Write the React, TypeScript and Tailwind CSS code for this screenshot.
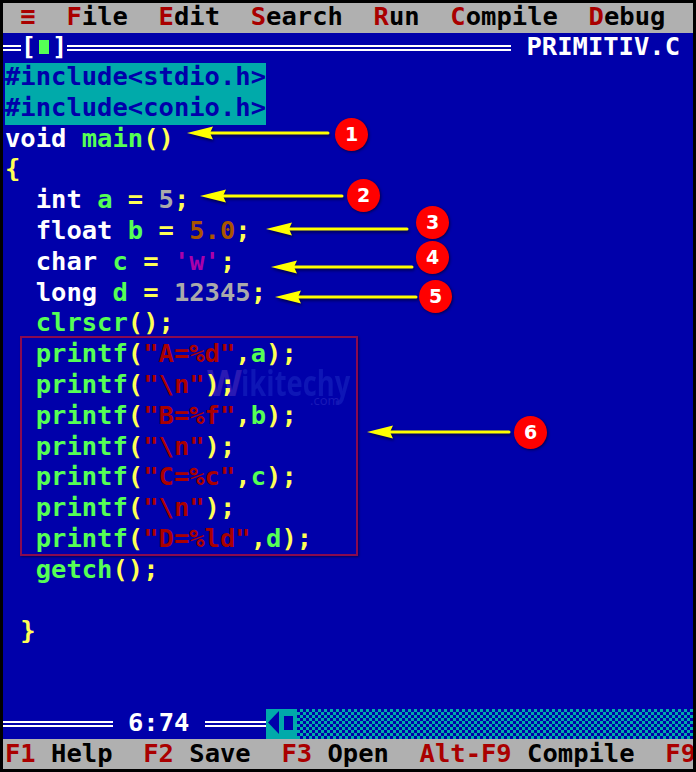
const RED = "text-[#aa0000]"
const WHITE = "text-white"
const GREEN = "text-[#55ff55]"
const YELLOW = "text-[#ffff55]"
const GRAY = "text-[#aaaaaa]"
const ORANGE = "text-[#aa5500]"
const MAGENTA = "text-[#aa00aa]"

type Seg = [string, string]

const code: Seg[][] = [
  [["void ", WHITE], ["main", GREEN], ["()", YELLOW]],
  [["{", YELLOW]],
  [["  int ", WHITE], ["a ", GREEN], ["= ", YELLOW], ["5", GRAY], [";", YELLOW]],
  [["  float ", WHITE], ["b ", GREEN], ["= ", YELLOW], ["5.0", ORANGE], [";", YELLOW]],
  [["  char ", WHITE], ["c ", GREEN], ["= ", YELLOW], ["'w'", MAGENTA], [";", YELLOW]],
  [["  long ", WHITE], ["d ", GREEN], ["= ", YELLOW], ["12345", GRAY], [";", YELLOW]],
  [["  clrscr", GREEN], ["();", YELLOW]],
  [["  printf", GREEN], ["(", YELLOW], ['"A=%d"', RED], [",", YELLOW], ["a", GREEN], [");", YELLOW]],
  [["  printf", GREEN], ["(", YELLOW], ['"\\n"', RED], [");", YELLOW]],
  [["  printf", GREEN], ["(", YELLOW], ['"B=%f"', RED], [",", YELLOW], ["b", GREEN], [");", YELLOW]],
  [["  printf", GREEN], ["(", YELLOW], ['"\\n"', RED], [");", YELLOW]],
  [["  printf", GREEN], ["(", YELLOW], ['"C=%c"', RED], [",", YELLOW], ["c", GREEN], [");", YELLOW]],
  [["  printf", GREEN], ["(", YELLOW], ['"\\n"', RED], [");", YELLOW]],
  [["  printf", GREEN], ["(", YELLOW], ['"D=%ld"', RED], [",", YELLOW], ["d", GREEN], [");", YELLOW]],
  [["  getch", GREEN], ["();", YELLOW]],
  [["", WHITE]],
  [[" }", YELLOW]],
]

const arrows = [
  { tip: 187, tail: 328, y: 133 },
  { tip: 200, tail: 342, y: 196 },
  { tip: 266, tail: 407, y: 229 },
  { tip: 271, tail: 412, y: 267 },
  { tip: 275, tail: 416, y: 297 },
  { tip: 367, tail: 509, y: 432 },
]

function Line({ segs }: { segs: Seg[] }) {
  return (
    <div className="h-[30.8px] leading-[26.8px] whitespace-pre">
      {segs.map(([text, color], i) => (
        <span key={i} className={color}>
          {text}
        </span>
      ))}
    </div>
  )
}

function DoubleRule({ className = "" }: { className?: string }) {
  return <div className={`h-[6px] border-y-2 border-white ${className}`} />
}

function Badge({ n, className }: { n: number; className: string }) {
  return (
    <div
      className={`absolute flex h-[33px] w-[33px] items-center justify-center rounded-full bg-[#ff0000] font-['DejaVu_Sans'] text-[19px] font-bold text-white shadow-[1px_1px_3px_rgba(0,0,40,0.7)] ${className}`}
    >
      {n}
    </div>
  )
}

export default function App() {
  return (
    <div className="relative isolate h-[772px] w-[696px] overflow-hidden border-[3px] border-black bg-[#0000aa] font-['DejaVu_Sans_Mono',monospace] text-[25.5px] font-bold">
      <div className="flex h-full flex-col">
        {/* 顶部菜单 */}
        <div className="h-[30px] shrink-0 whitespace-pre bg-[#b0b0b0] pl-[2px] leading-[26px] text-black">
          {" "}
          <span className={RED}>≡</span>
          {"  "}
          <span className={RED}>F</span>ile{"  "}
          <span className={RED}>E</span>dit{"  "}
          <span className={RED}>S</span>earch{"  "}
          <span className={RED}>R</span>un{"  "}
          <span className={RED}>C</span>ompile{"  "}
          <span className={RED}>D</span>ebug
        </div>

        {/* 标题栏 */}
        <div className="flex h-[30px] shrink-0 items-center text-white">
          <DoubleRule className="w-[18px]" />
          <div className="flex h-[30px] w-[46px] items-center justify-center gap-[3px] leading-[26px]">
            <span className="-translate-y-[2px]">[</span>
            <span className="h-[14px] w-[10px] shrink-0 -translate-y-[1px] bg-[#55ff55]" />
            <span className="-translate-y-[2px]">]</span>
          </div>
          <DoubleRule className="flex-1" />
          <span className="ml-[15px] mr-[13px] -translate-y-[2px]">PRIMITIV.C</span>
        </div>

        {/* 代码区 */}
        <div className="flex-1 overflow-hidden pl-[2px]">
          <div className="w-[261px] bg-[#00aaaa]">
            <Line segs={[["#include<stdio.h>", "text-[#0000aa]"]]} />
            <Line segs={[["#include<conio.h>", "text-[#0000aa]"]]} />
          </div>
          {code.map((segs, i) => (
            <Line key={i} segs={segs} />
          ))}
        </div>

        {/* 状态栏 */}
        <div className="flex h-[30px] shrink-0 items-center text-white">
          <DoubleRule className="w-[110px]" />
          <span className="ml-[15px] mr-[16px] -translate-y-[2px]">6:74</span>
          <DoubleRule className="w-[61px]" />
          <div className="relative h-[30px] w-[31px] bg-[#00aaaa]">
            <svg className="absolute left-0 top-0" width="31" height="30" viewBox="0 0 31 30">
              <path d="M2 13.5 L13 2 V25 Z" fill="#0000aa" />
              <rect x="18" y="7" width="9" height="14" fill="#0000aa" />
            </svg>
          </div>
          <div className="h-[30px] flex-1 bg-[repeating-conic-gradient(#00aaaa_0_25%,#0000aa_0_50%)] bg-[length:6px_6px]" />
        </div>

        {/* 底部快捷键 */}
        <div className="h-[30px] shrink-0 overflow-hidden whitespace-pre bg-[#b0b0b0] pl-[2px] leading-[28px] text-black">
          <span className={RED}>F1</span> Help{"  "}
          <span className={RED}>F2</span> Save{"  "}
          <span className={RED}>F3</span> Open{"  "}
          <span className={RED}>Alt-F9</span> Compile{"  "}
          <span className={RED}>F9</span>
        </div>
      </div>

      {/* 水印，压在代码下面 */}
      <div className="absolute left-[204px] top-[358px] -z-10 flex whitespace-pre font-['Open_Sans'] text-[36px] font-bold leading-[44px]">
        <span className="text-[#2a1ab4]">W</span>
        <span className="-ml-[1px] inline-block origin-left scale-x-[0.76] text-[#0e16b6]">ikitechy</span>
      </div>
      <div className="absolute left-[307px] top-[390px] -z-10 font-['Open_Sans'] text-[13px] font-normal leading-[14px] text-[#1a1ab8]">
        .com
      </div>

      {/* 红框 */}
      <div className="absolute left-[17px] top-[333px] h-[220px] w-[338px] border-2 border-[#8a0a50] shadow-[1px_1px_2px_rgba(0,0,40,0.6)]" />

      {/* 箭头 */}
      <svg
        className="absolute -left-[3px] -top-[3px] drop-shadow-[1px_2px_1.5px_rgba(0,0,40,0.7)]"
        width="696"
        height="772"
        viewBox="0 0 696 772"
      >
        {arrows.map((a) => (
          <g key={a.y}>
            <line x1={a.tip + 20} y1={a.y} x2={a.tail} y2={a.y} stroke="#ffff00" strokeWidth="3" strokeLinecap="round" />
            <path
              d={`M${a.tip} ${a.y} L${a.tip + 26} ${a.y - 6.5} L${a.tip + 23} ${a.y} L${a.tip + 26} ${a.y + 6.5} Z`}
              fill="#ffff00"
            />
          </g>
        ))}
      </svg>

      {/* 序号 */}
      <Badge n={1} className="left-[332px] top-[115px]" />
      <Badge n={2} className="left-[344px] top-[176px]" />
      <Badge n={3} className="left-[413px] top-[203px]" />
      <Badge n={4} className="left-[413px] top-[238px]" />
      <Badge n={5} className="left-[416px] top-[277px]" />
      <Badge n={6} className="left-[511px] top-[413px]" />
    </div>
  )
}
